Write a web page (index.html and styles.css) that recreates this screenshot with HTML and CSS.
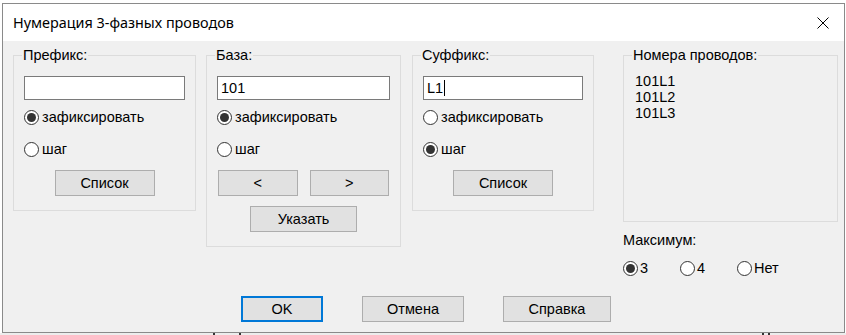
FILE: index.html
```html
<!DOCTYPE html>
<html lang="ru">
  <head>
    <meta charset="UTF-8" />
    <title>Нумерация 3-фазных проводов</title>
    <link rel="stylesheet" href="styles.css">
  </head>
  <body>
    <div class="dialog">
      <!-- заголовок окна -->
      <header class="titlebar">
        <div class="title">Нумерация 3-фазных проводов</div>
        <div class="close-btn">
          <svg width="12" height="12" viewBox="0 0 12 12">
            <path d="M0.5 0.5 L11.5 11.5 M11.5 0.5 L0.5 11.5" stroke="#000" stroke-width="1" fill="none" />
          </svg>
        </div>
      </header>

      <div class="dialog-body">
        <div class="groups">
          <!-- Префикс -->
          <fieldset class="group group-prefix">
            <legend>Префикс:</legend>
            <div class="text-field"></div>
            <div class="radio-row"><span class="radio checked"></span>зафиксировать</div>
            <div class="radio-row"><span class="radio"></span>шаг</div>
            <div class="btn-row"><button class="btn btn-list">Список</button></div>
          </fieldset>

          <!-- База -->
          <fieldset class="group group-base">
            <legend>База:</legend>
            <div class="text-field">101</div>
            <div class="radio-row"><span class="radio checked"></span>зафиксировать</div>
            <div class="radio-row"><span class="radio"></span>шаг</div>
            <div class="btn-row btn-pair">
              <button class="btn">&lt;</button>
              <button class="btn">&gt;</button>
            </div>
            <div class="btn-row"><button class="btn btn-point">Указать</button></div>
          </fieldset>

          <!-- Суффикс -->
          <fieldset class="group group-suffix">
            <legend>Суффикс:</legend>
            <div class="text-field">L1<span class="caret"></span></div>
            <div class="radio-row"><span class="radio"></span>зафиксировать</div>
            <div class="radio-row"><span class="radio checked"></span>шаг</div>
            <div class="btn-row"><button class="btn btn-list">Список</button></div>
          </fieldset>

          <!-- Номера проводов -->
          <div class="result-col">
            <fieldset class="group group-result">
              <legend>Номера проводов:</legend>
              <div class="wire-list">
                <div>101L1</div>
                <div>101L2</div>
                <div>101L3</div>
              </div>
            </fieldset>
            <div class="max-label">Максимум:</div>
            <div class="max-options">
              <div class="max-option"><span class="radio checked"></span>3</div>
              <div class="max-option"><span class="radio"></span>4</div>
              <div class="max-option"><span class="radio"></span>Нет</div>
            </div>
          </div>
        </div>

        <!-- кнопки диалога -->
        <footer class="footer">
          <button class="btn btn-ok">OK</button>
          <button class="btn btn-cancel">Отмена</button>
          <button class="btn btn-help">Справка</button>
        </footer>
      </div>
    </div>
    <div class="backdrop"></div>
  </body>
</html>
```

FILE: styles.css
```css
html,
body {
  margin: 0;
  padding: 0;
  width: 846px;
  height: 335px;
  overflow: hidden;
  background-color: #fff;
  font-family: "Liberation Sans", Arial, sans-serif;
  font-size: 14.5px;
  color: #000;
}

/* окно диалога */
.dialog {
  width: 841px;
  height: 328px;
  margin: 3px 0 0 2px;
  border: 1px solid #8a8a8a;
  display: flex;
  flex-direction: column;
  background-color: #f0f0f0;
}

.titlebar {
  height: 37px;
  display: flex;
  align-items: center;
  justify-content: space-between;
  background-color: #fff;
}

.title {
  padding-left: 10px;
  font-family: "Noto Sans", sans-serif;
  font-size: 14.4px;
}

.close-btn {
  width: 46px;
  display: flex;
  justify-content: center;
  margin-right: -2px;
}

.close-btn svg {
  display: block;
}

.dialog-body {
  flex: 1;
  display: flex;
  flex-direction: column;
}

.groups {
  display: flex;
  align-items: flex-start;
  padding: 5px 0 0 10px;
}

/* групповые рамки */
.group {
  margin: 0;
  padding: 12px 10px 14px;
  border: 1px solid #dcdcdc;
  box-sizing: border-box;
  min-width: 0;
}

.group legend {
  margin-left: -2px;
  padding: 0 1px;
  line-height: 18px;
}

.group-prefix {
  width: 183px;
}

.group-base {
  width: 195px;
  margin-left: 10px;
}

.group-suffix {
  width: 182px;
  margin-left: 11px;
}

.text-field {
  height: 24px;
  box-sizing: border-box;
  border: 1px solid #7a7a7a;
  background-color: #fff;
  padding: 0 3px;
  line-height: 22px;
  display: flex;
  align-items: center;
}

.caret {
  display: inline-block;
  width: 1px;
  height: 16px;
  background-color: #000;
  margin-left: 1px;
}

.radio-row {
  display: flex;
  align-items: center;
  gap: 3px;
  height: 20px;
  margin-top: 7px;
}

.radio-row + .radio-row {
  margin-top: 12px;
}

.radio {
  width: 15px;
  height: 15px;
  box-sizing: border-box;
  border: 1px solid #333;
  border-radius: 50%;
  background-color: #fff;
  display: flex;
  align-items: center;
  justify-content: center;
  flex-shrink: 0;
}

.radio.checked::after {
  content: "";
  width: 9px;
  height: 9px;
  border-radius: 50%;
  background-color: #333;
}

.btn-row {
  display: flex;
  justify-content: center;
  margin-top: 11px;
}

.btn-pair {
  gap: 12px;
  padding: 0 1px;
}

.btn-pair .btn {
  flex: 1;
}

.btn-pair + .btn-row {
  margin-top: 10px;
}

.btn {
  height: 26px;
  box-sizing: border-box;
  border: 1px solid #adadad;
  background-color: #e1e1e1;
  font-family: inherit;
  font-size: 14.5px;
  color: #000;
  padding: 0;
}

.btn-list {
  width: 100px;
}

.btn-point {
  width: 107px;
}

/* правая колонка */
.result-col {
  width: 215px;
  margin-left: 29px;
  display: flex;
  flex-direction: column;
}

.group-result {
  width: 215px;
  height: 176px;
  padding: 9px 11px 0;
}

.group-result legend {
  margin-left: -3px;
}

.wire-list {
  line-height: 16px;
}

.max-label {
  margin-top: 9px;
  line-height: 18px;
}

.max-options {
  display: flex;
  margin-top: 10px;
}

.max-option {
  width: 57px;
  display: flex;
  align-items: center;
  gap: 2px;
  height: 18px;
}

.footer {
  margin-top: auto;
  padding: 0 0 10px 238px;
  display: flex;
  gap: 39px;
}

.btn-ok {
  width: 82px;
  border: 2px solid #0078d7;
}

.btn-cancel {
  width: 102px;
}

.btn-help {
  width: 108px;
}

/* полоска за окном */
.backdrop {
  height: 3px;
  background:
    linear-gradient(to right,
      #ededed 213px, #333 213px, #333 215px, #ededed 215px,
      #ededed 239px, #333 239px, #333 241px, #ededed 241px,
      #ededed 762px, #333 762px, #333 764px, #ededed 764px,
      #ededed 768px, #333 768px, #333 770px, #ededed 770px);
}
```
